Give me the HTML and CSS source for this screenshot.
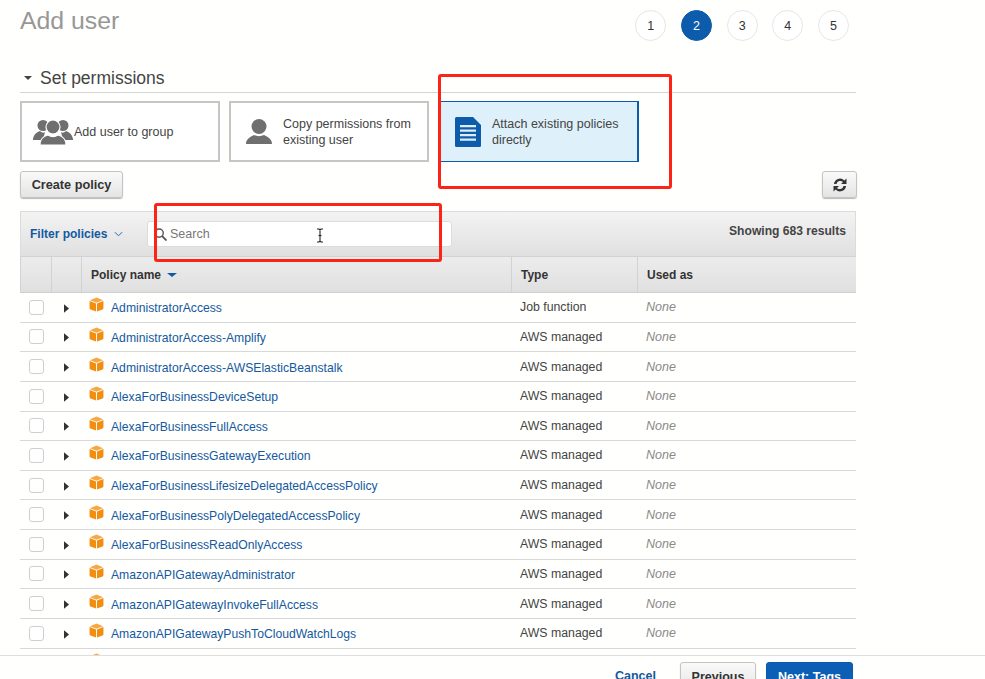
FILE: index.html
```html
<!DOCTYPE html>
<html lang="en">
<head>
<meta charset="utf-8">
<title>Add user</title>
<link rel="stylesheet" href="styles.css">
</head>
<body>
<svg class="defs" width="0" height="0" aria-hidden="true">
  <defs>
    <symbol id="cube" viewBox="0 0 16 16">
      <path d="M8 .6 15 3.4 8 6.2 1 3.4Z" fill="#f7a845"/>
      <path d="M.6 4.2 7.5 7v8.4L1.6 13.3a1.500 1.500 0 0 1-1-1.400Z" fill="#f28e0f"/>
      <path d="M15.400 4.200 8.500 7v8.400l5.900-2.100a1.500 1.500 0 0 0 1-1.400Z" fill="#f28e0f"/>
    </symbol>
    <symbol id="caret" viewBox="0 0 6 10">
      <path d="M0 0 6 5 0 10Z" fill="#333"/>
    </symbol>
  </defs>
</svg>
<main class="page">
  <header class="top">
    <h1 class="title">Add user</h1>
    <ol class="steps">
      <li class="step">1</li>
      <li class="step step-on">2</li>
      <li class="step">3</li>
      <li class="step">4</li>
      <li class="step">5</li>
    </ol>
  </header>
  <h2 class="section"><span class="section-caret"></span>Set permissions</h2>
  <div class="cards">
    <div class="card">
      <svg class="card-icon-group" viewBox="0 0 40 26" width="40" height="26"><g fill="#6f6f6f"><circle cx="10" cy="6.500" r="5.500"/><circle cx="30" cy="6.500" r="5.500"/><path d="M0 20c1-5 4-7 7-8 2 2 4 2 5 1l-2 8H0ZM40 20c-1-5-4-7-7-8-2 2-4 2-5 1l2 8h10Z"/></g><g fill="#6f6f6f" stroke="#fff" stroke-width="1.200"><circle cx="20" cy="8" r="7"/><path d="M7 26c0-6 4-9 8-10 3 2 7 2 10 0 4 1 8 4 8 10Z"/></g></svg>
      <span class="card-text card-text-tight">Add user to group</span>
    </div>
    <div class="card">
      <svg class="card-icon-user" viewBox="0 0 26 25" width="26" height="25"><circle cx="13" cy="7.500" r="7.500" fill="#6f6f6f"/><path d="M0 25c0-2 .5-6 8-9 3 1.500 7 1.500 10 0 7.500 3 8 7 8 9Z" fill="#6f6f6f"/></svg>
      <span class="card-text">Copy permissions from existing user</span>
    </div>
    <div class="card card-on">
      <svg class="card-icon-doc" viewBox="0 0 26 30" width="26" height="30"><path d="M1.500 0H18l8 8v20.500a1.500 1.500 0 0 1-1.500 1.500h-23A1.500 1.500 0 0 1 0 28.500V1.500A1.500 1.500 0 0 1 1.500 0Z" fill="#0d5bab"/><path d="M5 8h16v2.200H5ZM5 12.500h16v2.200H5ZM5 17h16v2.200H5ZM5 21.500h16v2.200H5Z" fill="#dcecf8"/></svg>
      <span class="card-text">Attach existing policies directly</span>
    </div>
  </div>
  <div class="actions">
    <button class="btn btn-create">Create policy</button>
    <button class="btn btn-icon" aria-label="Refresh">
      <svg viewBox="0 0 16 16" width="16" height="16"><path d="M2 7A6 6 0 0 1 12.300 3.400L14.500 1.500V7H9l2-1.900A3.800 3.800 0 0 0 4.500 7ZM14 9A6 6 0 0 1 3.700 12.600L1.500 14.500V9H7l-2 1.900A3.800 3.800 0 0 0 11.500 9Z" fill="#333"/></svg>
    </button>
  </div>
  <section class="table">
    <div class="filter">
      <span class="filter-label">Filter policies
        <svg viewBox="0 0 10 6" width="9" height="6"><path d="M1 1 5 5 9 1" fill="none" stroke="#0d5bab" stroke-width="1"/></svg>
      </span>
      <div class="search">
        <svg viewBox="0 0 14 14" width="13" height="13"><circle cx="5.500" cy="5.500" r="4.500" fill="none" stroke="#555" stroke-width="1.500"/><path d="M8.800 8.800 13.500 13.500" stroke="#555" stroke-width="2"/></svg>
        <span class="search-text">Search</span>
      </div>
      <span class="results">Showing 683 results</span>
    </div>
    <div class="row row-head">
      <span class="cell-head"></span>
      <span class="cell-head"></span>
      <span class="cell-head cell-name">Policy name<i class="sort"></i></span>
      <span class="cell-head cell-type">Type</span>
      <span class="cell-head cell-used">Used as</span>
    </div>
    <div class="row"><span class="check"></span><svg class="caret"><use href="#caret"/></svg><span class="name"><svg class="cube"><use href="#cube"/></svg><a>AdministratorAccess</a></span><span class="type">Job function</span><em class="used">None</em></div>
    <div class="row"><span class="check"></span><svg class="caret"><use href="#caret"/></svg><span class="name"><svg class="cube"><use href="#cube"/></svg><a>AdministratorAccess-Amplify</a></span><span class="type">AWS managed</span><em class="used">None</em></div>
    <div class="row"><span class="check"></span><svg class="caret"><use href="#caret"/></svg><span class="name"><svg class="cube"><use href="#cube"/></svg><a>AdministratorAccess-AWSElasticBeanstalk</a></span><span class="type">AWS managed</span><em class="used">None</em></div>
    <div class="row"><span class="check"></span><svg class="caret"><use href="#caret"/></svg><span class="name"><svg class="cube"><use href="#cube"/></svg><a>AlexaForBusinessDeviceSetup</a></span><span class="type">AWS managed</span><em class="used">None</em></div>
    <div class="row"><span class="check"></span><svg class="caret"><use href="#caret"/></svg><span class="name"><svg class="cube"><use href="#cube"/></svg><a>AlexaForBusinessFullAccess</a></span><span class="type">AWS managed</span><em class="used">None</em></div>
    <div class="row"><span class="check"></span><svg class="caret"><use href="#caret"/></svg><span class="name"><svg class="cube"><use href="#cube"/></svg><a>AlexaForBusinessGatewayExecution</a></span><span class="type">AWS managed</span><em class="used">None</em></div>
    <div class="row"><span class="check"></span><svg class="caret"><use href="#caret"/></svg><span class="name"><svg class="cube"><use href="#cube"/></svg><a>AlexaForBusinessLifesizeDelegatedAccessPolicy</a></span><span class="type">AWS managed</span><em class="used">None</em></div>
    <div class="row"><span class="check"></span><svg class="caret"><use href="#caret"/></svg><span class="name"><svg class="cube"><use href="#cube"/></svg><a>AlexaForBusinessPolyDelegatedAccessPolicy</a></span><span class="type">AWS managed</span><em class="used">None</em></div>
    <div class="row"><span class="check"></span><svg class="caret"><use href="#caret"/></svg><span class="name"><svg class="cube"><use href="#cube"/></svg><a>AlexaForBusinessReadOnlyAccess</a></span><span class="type">AWS managed</span><em class="used">None</em></div>
    <div class="row"><span class="check"></span><svg class="caret"><use href="#caret"/></svg><span class="name"><svg class="cube"><use href="#cube"/></svg><a>AmazonAPIGatewayAdministrator</a></span><span class="type">AWS managed</span><em class="used">None</em></div>
    <div class="row"><span class="check"></span><svg class="caret"><use href="#caret"/></svg><span class="name"><svg class="cube"><use href="#cube"/></svg><a>AmazonAPIGatewayInvokeFullAccess</a></span><span class="type">AWS managed</span><em class="used">None</em></div>
    <div class="row"><span class="check"></span><svg class="caret"><use href="#caret"/></svg><span class="name"><svg class="cube"><use href="#cube"/></svg><a>AmazonAPIGatewayPushToCloudWatchLogs</a></span><span class="type">AWS managed</span><em class="used">None</em></div>
    <div class="row"><span class="check"></span><svg class="caret"><use href="#caret"/></svg><span class="name"><svg class="cube"><use href="#cube"/></svg></span></div>
  </section>
</main>
<footer class="footer">
  <a class="cancel">Cancel</a>
  <button class="btn btn-foot">Previous</button>
  <button class="btn btn-next">Next: Tags</button>
</footer>
<div class="mark mark-card"></div>
<div class="mark mark-search"></div>
<svg class="ibeam" viewBox="0 0 8 15" width="8" height="15"><path d="M1 1h2l1 1 1-1h2M4 2v11M1 14h2l1-1 1 1h2M2.500 7.500h3" fill="none" stroke="#222" stroke-width="1.100"/></svg>
</body>
</html>
```
FILE: styles.css
```css
* { box-sizing: border-box; }
html, body { margin: 0; height: 679px; overflow: hidden; }
body {
  position: relative;
  background: #fffffd;
  color: #333;
  font-family: "Liberation Sans", Arial, sans-serif;
  font-size: 12.5px;
  display: flex;
  flex-direction: column;
}
.defs { position: absolute; }
.page { height: 655px; flex: none; overflow: hidden; padding: 0 129px 0 20px; }

.top { height: 66px; display: flex; justify-content: space-between; align-items: flex-start; }
.title { margin: 7px 0 0; font-size: 24.800px; font-weight: 400; line-height: 28px; color: #979797; }
.steps { list-style: none; margin: 10px 7px 0 0; padding: 0; display: flex; gap: 14.700px; }
.step {
  width: 31px; height: 31px; border-radius: 50%;
  border: 1px solid #e6e6e6; background: #fff;
  display: flex; align-items: center; justify-content: center;
  font-size: 12.500px; color: #333;
}
.step-on { background: #0d5bab; border-color: #0d5bab; color: #fff; }

.section {
  margin: 0; height: 27px; padding-left: 4px;
  font-size: 17.500px; font-weight: 400; line-height: 24px; color: #444;
  border-bottom: 1px solid #d5d5d5;
  display: flex; align-items: center; padding-bottom: 3px;
}
.section-caret {
  width: 0; height: 0; margin-right: 8px;
  border-left: 4px solid transparent; border-right: 4px solid transparent; border-top: 4px solid #444;
}

.cards { display: flex; gap: 9px; margin-top: 8px; height: 61px; }
.card {
  width: 200px; border: 2px solid #c6c6c6; background: #fff;
  display: flex; align-items: center; line-height: 16px; color: #444;
}
.card-on { width: 201px; border-width: 1px 2px 1.500px 1px; background: #def0fa; border-color: #0d5bab; }
.card-icon-group { margin: 0 0 0 11px; flex: none; }
.card-icon-user { margin: 0 0 0 15px; flex: none; }
.card-icon-doc { margin: 0 0 0 16px; flex: none; }
.card-text { margin-left: 11px; padding-right: 4px; padding-top: 1px; }
.card-text-tight { margin-left: 1px; }
.card-on .card-text { margin-left: 11px; padding-right: 4px; }

.actions { display: flex; justify-content: space-between; margin: 9px -1px 0 0; height: 27px; }
.btn {
  font-family: inherit; font-size: 12.500px; font-weight: 700; color: #333;
  height: 27px; padding: 0;
  border: 1px solid #c4c4c4; border-radius: 3px;
  background: linear-gradient(#fafafa, #e4e4e4);
  box-shadow: 0 1px 1px #b8b8b8;
}
.btn-create { width: 103px; font-size: 12.700px; }
.btn-icon { width: 35px; display: flex; align-items: center; justify-content: center; }

.table { margin-top: 13px; }
.filter {
  height: 46px; display: flex; align-items: center; padding: 0 9px 0 9px;
  border: 1px solid #dcdcdc; border-bottom: 1px solid #d2d2d2;
  background: linear-gradient(#f3f3f3, #e0e0e0);
}
.filter-label { font-size: 12px; font-weight: 700; color: #14599f; width: 117px; display: flex; align-items: center; gap: 7px; white-space: nowrap; }
.search {
  width: 305px; height: 26px; background: #fff;
  border: 1px solid #dcdcdc; border-radius: 3px;
  display: flex; align-items: center; padding-left: 6px; gap: 3px; color: #777;
}
.search-text { font-size: 12.500px; }
.results { margin-left: auto; font-size: 12.100px; font-weight: 700; margin-top: -6px; color: #444; }

.row {
  display: grid; grid-template-columns: 31px 30px 430px 126px 1fr;
  height: 29.640px; align-items: center;
  border-bottom: 1px solid #d8d8d8;
  background: #fffffd;
}
.row-head {
  height: 36px; border-bottom: 1px solid #cfcfcf;
  background: linear-gradient(#ececec, #e0e0e0);
  align-items: stretch; font-size: 12px; font-weight: 700;
}
.cell-head { border-left: 1px solid #d2d2d2; display: flex; align-items: center; padding-left: 9px; }
.sort {
  width: 0; height: 0; margin-left: 6px;
  border-left: 5px solid transparent; border-right: 5px solid transparent; border-top: 4px solid #14599f;
}
.check {
  width: 14.500px; height: 15px; margin-left: 9px;
  border: 1px solid #cfcfcf; border-radius: 3px; background: #fff;
}
.caret { width: 5px; height: 9px; margin-left: 13px; margin-top: 2px; }
.name { display: flex; align-items: center; padding-left: 8px; white-space: nowrap; }
.cube { width: 15px; height: 15px; margin-top: -5px; flex: none; }
.name a { margin-left: 7px; margin-top: 2px; font-size: 12.180px; color: #14599f; }
.type { padding-left: 9px; font-size: 12.300px; color: #444; }
.used { padding-left: 9px; color: #8a8a8a; }

.footer {
  flex: none; height: 60px; padding: 6px 132px 0 0;
  border-top: 1px solid #dedede; background: #fffffd;
  display: flex; justify-content: flex-end; align-items: flex-start;
}
.cancel { margin: 7px 24px 0 0; font-weight: 700; color: #14599f; }
.btn-foot { width: 76px; height: 30px; margin-right: 10px; }
.btn-next { width: 87px; height: 30px; background: #0d5fb5; border-color: #0d5bab; color: #fff; }

.mark { position: absolute; border: 3px solid #fb2419; border-radius: 3px; }
.mark-card { left: 438px; top: 74px; width: 234px; height: 115px; }
.mark-search { left: 154px; top: 203px; width: 288px; height: 59px; }
.ibeam { position: absolute; left: 316px; top: 228px; }
```
